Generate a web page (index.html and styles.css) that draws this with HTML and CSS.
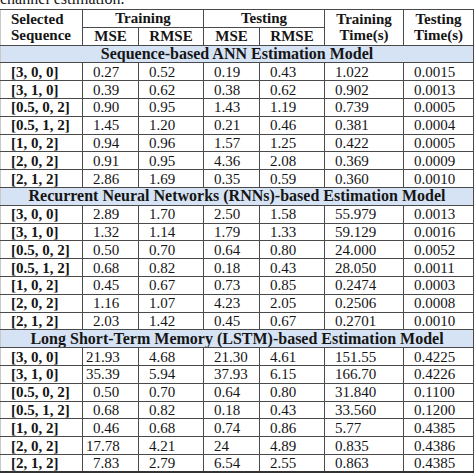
FILE: index.html
```html
<!DOCTYPE html>
<html>
<head>
<meta charset="utf-8">
<link rel="stylesheet" href="styles.css">
</head>
<body>
<div class="caption"><span>channel estimation.</span></div>
<table class="results">
  <colgroup>
    <col class="c0"><col class="c1"><col class="c2"><col class="c3"><col class="c4"><col class="c5"><col class="c6">
  </colgroup>
  <thead>
    <tr>
      <th rowspan="2" class="left">Selected<br>Sequence</th>
      <th colspan="2">Training</th>
      <th colspan="2">Testing</th>
      <th rowspan="2">Training<br>Time(s)</th>
      <th rowspan="2">Testing<br>Time(s)</th>
    </tr>
    <tr>
      <th>MSE</th><th>RMSE</th><th>MSE</th><th>RMSE</th>
    </tr>
  </thead>
  <tbody>
    <tr class="section"><td colspan="7">Sequence-based ANN Estimation Model</td></tr>
    <tr><td class="seq">[3, 0, 0]</td><td>0.27</td><td>0.52</td><td>0.19</td><td>0.43</td><td>1.022</td><td>0.0015</td></tr>
    <tr><td class="seq">[3, 1, 0]</td><td>0.39</td><td>0.62</td><td>0.38</td><td>0.62</td><td>0.902</td><td>0.0013</td></tr>
    <tr><td class="seq">[0.5, 0, 2]</td><td>0.90</td><td>0.95</td><td>1.43</td><td>1.19</td><td>0.739</td><td>0.0005</td></tr>
    <tr><td class="seq">[0.5, 1, 2]</td><td>1.45</td><td>1.20</td><td>0.21</td><td>0.46</td><td>0.381</td><td>0.0004</td></tr>
    <tr><td class="seq">[1, 0, 2]</td><td>0.94</td><td>0.96</td><td>1.57</td><td>1.25</td><td>0.422</td><td>0.0005</td></tr>
    <tr><td class="seq">[2, 0, 2]</td><td>0.91</td><td>0.95</td><td>4.36</td><td>2.08</td><td>0.369</td><td>0.0009</td></tr>
    <tr><td class="seq">[2, 1, 2]</td><td>2.86</td><td>1.69</td><td>0.35</td><td>0.59</td><td>0.360</td><td>0.0010</td></tr>
    <tr class="section"><td colspan="7">Recurrent Neural Networks (RNNs)-based Estimation Model</td></tr>
    <tr><td class="seq">[3, 0, 0]</td><td>2.89</td><td>1.70</td><td>2.50</td><td>1.58</td><td>55.979</td><td>0.0013</td></tr>
    <tr><td class="seq">[3, 1, 0]</td><td>1.32</td><td>1.14</td><td>1.79</td><td>1.33</td><td>59.129</td><td>0.0016</td></tr>
    <tr><td class="seq">[0.5, 0, 2]</td><td>0.50</td><td>0.70</td><td>0.64</td><td>0.80</td><td>24.000</td><td>0.0052</td></tr>
    <tr><td class="seq">[0.5, 1, 2]</td><td>0.68</td><td>0.82</td><td>0.18</td><td>0.43</td><td>28.050</td><td>0.0011</td></tr>
    <tr><td class="seq">[1, 0, 2]</td><td>0.45</td><td>0.67</td><td>0.73</td><td>0.85</td><td>0.2474</td><td>0.0003</td></tr>
    <tr><td class="seq">[2, 0, 2]</td><td>1.16</td><td>1.07</td><td>4.23</td><td>2.05</td><td>0.2506</td><td>0.0008</td></tr>
    <tr><td class="seq">[2, 1, 2]</td><td>2.03</td><td>1.42</td><td>0.45</td><td>0.67</td><td>0.2701</td><td>0.0010</td></tr>
    <tr class="section"><td colspan="7">Long Short-Term Memory (LSTM)-based Estimation Model</td></tr>
    <tr><td class="seq">[3, 0, 0]</td><td class="wide">21.93</td><td>4.68</td><td>21.30</td><td>4.61</td><td>151.55</td><td>0.4225</td></tr>
    <tr><td class="seq">[3, 1, 0]</td><td class="wide">35.39</td><td>5.94</td><td>37.93</td><td>6.15</td><td>166.70</td><td>0.4226</td></tr>
    <tr><td class="seq">[0.5, 0, 2]</td><td>0.50</td><td>0.70</td><td>0.64</td><td>0.80</td><td>31.840</td><td>0.1100</td></tr>
    <tr><td class="seq">[0.5, 1, 2]</td><td>0.68</td><td>0.82</td><td>0.18</td><td>0.43</td><td>33.560</td><td>0.1200</td></tr>
    <tr><td class="seq">[1, 0, 2]</td><td>0.46</td><td>0.68</td><td>0.74</td><td>0.86</td><td>5.77</td><td>0.4385</td></tr>
    <tr><td class="seq">[2, 0, 2]</td><td class="wide">17.78</td><td>4.21</td><td>24</td><td>4.89</td><td>0.835</td><td>0.4386</td></tr>
    <tr><td class="seq">[2, 1, 2]</td><td>7.83</td><td>2.79</td><td>6.54</td><td>2.55</td><td>0.863</td><td>0.4385</td></tr>
  </tbody>
</table>
</body>
</html>
```
FILE: styles.css
```css
html, body {
  margin: 0;
  padding: 0;
  background: #ffffff;
}
body {
  font-family: "Liberation Serif", "Times New Roman", serif;
  color: #151515;
  overflow: hidden;
}
.caption {
  height: 9px;
  overflow: hidden;
}
.caption span {
  display: block;
  font-size: 16px;
  line-height: 16px;
  margin-top: -9px;
  white-space: nowrap;
}
.results {
  border-collapse: collapse;
  table-layout: fixed;
  width: 473px;
  font-size: 15px;
}
.c0 { width: 82px; }
.c1 { width: 56px; }
.c2 { width: 65px; }
.c3 { width: 56px; }
.c4 { width: 65px; }
.c5 { width: 79px; }
.c6 { width: 70px; }
.results tr {
  height: 17.8px;
}
.results th,
.results td {
  border: 1px solid #4a4a4a;
  padding: 0 0 0 10px;
  line-height: 14px;
  white-space: nowrap;
  overflow: hidden;
  text-align: left;
  font-weight: normal;
  vertical-align: middle;
}
.results th {
  font-weight: bold;
  text-align: center;
  padding: 0;
  line-height: 16px;
}
.results th.left {
  text-align: left;
  padding-left: 10px;
}
.results td.seq {
  font-weight: bold;
}
.results td.wide {
  padding-left: 3px;
}
.results tr.section td {
  background: #d6e3f4;
  font-weight: bold;
  font-size: 16px;
  text-align: center;
  padding: 0;
}
.results tbody tr:last-child td {
  border-bottom: 2px solid #333;
}
.results tr > :first-child {
  border-left-color: #c8c8c8;
}
```
